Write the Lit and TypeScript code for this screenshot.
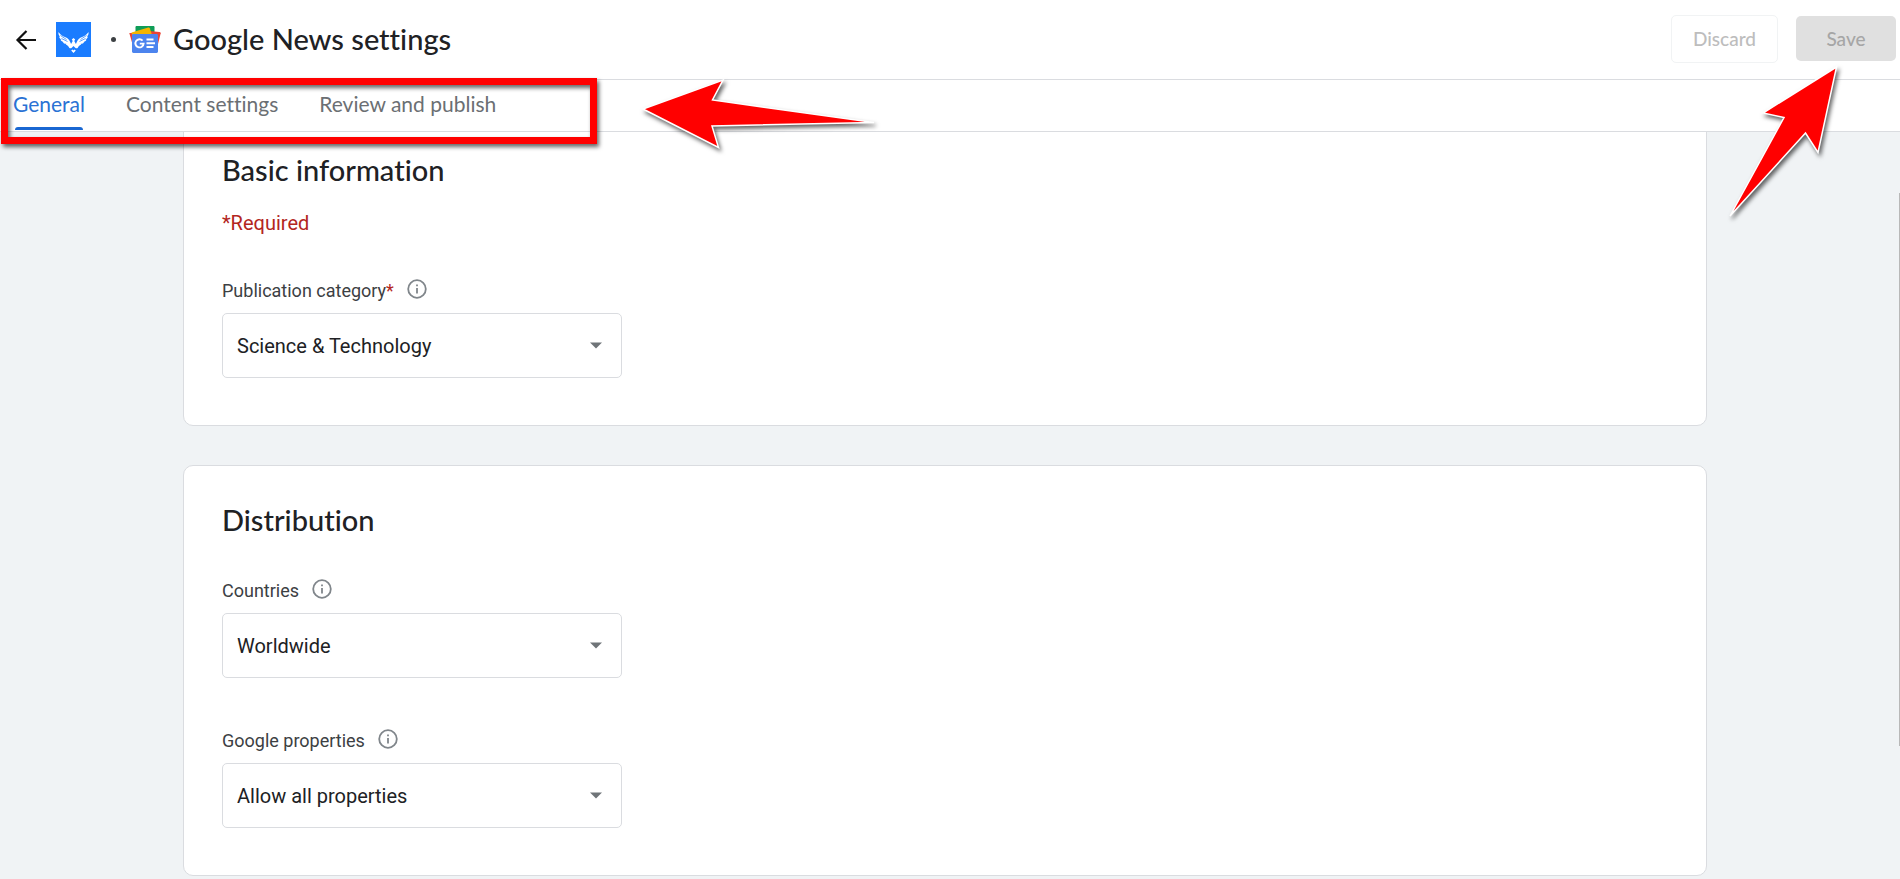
import { LitElement, html, css, nothing } from "lit";
import { customElement, property, state } from "lit/decorators.js";

interface Field {
  id: string;
  label: string;
  required?: boolean;
  options: string[];
}

const CATEGORY: Field[] = [
  { id: "category", label: "Publication category", required: true, options: ["Science & Technology"] },
];

const DISTRIBUTION: Field[] = [
  { id: "countries", label: "Countries", options: ["Worldwide"] },
  { id: "properties", label: "Google properties", options: ["Allow all properties"] },
];

const TABS = ["General", "Content settings", "Review and publish"];

/* One labelled drop-down with its info button. */
@customElement("select-field")
export class SelectField extends LitElement {
  @property({ attribute: false }) field!: Field;

  static styles = css`
    :host {
      display: block;
      font-family: Roboto, sans-serif;
    }
    .caption {
      display: flex;
      align-items: center;
      gap: 13px;
      height: 24px;
      margin-bottom: 12px;
    }
    label {
      padding-top: 3px;
      font-size: 18px;
      line-height: 24px;
      color: #3c4043;
    }
    .star {
      color: #b3261e;
    }
    .info {
      display: flex;
      padding: 0;
      border: 0;
      background: none;
    }
    .box {
      position: relative;
      width: 400px;
      max-width: 100%;
    }
    select {
      display: block;
      width: 100%;
      height: 65px;
      padding: 0 48px 0 14px;
      border: 1px solid #dadce0;
      border-radius: 5px;
      background: #fff;
      color: #202124;
      font: 400 20px Roboto, sans-serif;
      appearance: none;
    }
    .caret {
      position: absolute;
      right: 20px;
      top: 29px;
      pointer-events: none;
    }
  `;

  render() {
    const { id, label, required, options } = this.field;
    return html`
      <div class="caption">
        <label for=${id}>${label}${required ? html`<span class="star">*</span>` : nothing}</label>
        <button class="info" type="button" aria-label="About ${label}">
          <svg width="20" height="20" viewBox="0 0 20 20">
            <circle cx="10" cy="10" r="8.8" fill="none" stroke="#80868b" stroke-width="1.8" />
            <path d="M9.1 9h1.8v5.4H9.1zM9.1 5.4h1.8v1.9H9.1z" fill="#80868b" />
          </svg>
        </button>
      </div>
      <div class="box">
        <select id=${id}>
          ${options.map((o) => html`<option>${o}</option>`)}
        </select>
        <svg class="caret" width="12" height="7" viewBox="0 0 12 7"><path d="M0 .5h12L6 6.5z" fill="#6f7478" /></svg>
      </div>
    `;
  }
}

const birdLogo = html`
  <svg width="35" height="35" viewBox="0 0 35 35" role="img" aria-label="Publication logo">
    <path fill="#1a7cff" d="M0 0h35v35H0z" />
    <g fill="#fff">
      <path d="M2.5 10c2 3.200 4.600 4.300 7 5.200 2.200.9 3.600 2.300 4.600 4.600l1 2.300 1.600-3-.9-1.600 1.700-1.500 1.700 1.500-.9 1.600 1.600 3 1-2.300c1-2.300 2.400-3.700 4.600-4.600 2.400-.9 5-2 7-5.200.3 2-.4 3.600-1.700 4.800.5 0 .8-.1 1.200-.3-.4 1.600-1.400 2.700-2.700 3.300h1.200c-.8 1.400-1.900 2.100-3.200 2.400l.9.4c-1 1-2.200 1.300-3.500 1.200l.5.7c-1.500.5-2.500 1.500-3.400 3.300-.7.8-1.800.7-2.600 0L17.500 24l-1.700 1.800c-.8.7-1.900.8-2.600 0-.9-1.800-1.900-2.800-3.400-3.300l.5-.7c-1.300.1-2.500-.2-3.500-1.200l.9-.4c-1.300-.3-2.400-1-3.200-2.400h1.200c-1.300-.6-2.300-1.700-2.700-3.300.4.200.7.300 1.200.3C2.900 13.600 2.200 12 2.500 10z" />
      <path d="M17.500 31l-2.300-2.400 1.300-1 1 .9 1-.9 1.300 1z" />
    </g>
    <path d="M4.500 13.500l6 4M5.500 16.500l6 3M30.500 13.500l-6 4M29.500 16.500l-6 3" stroke="#1a7cff" stroke-width=".7" fill="none" />
  </svg>
`;

const newsLogo = html`
  <svg width="32" height="27" viewBox="0 0 32 27" role="img" aria-label="Google News">
    <path fill="#0f9d58" d="M6.500 1.200c0-.7.500-1.200 1.200-1.200h16.600c.7 0 1.200.5 1.200 1.200V14h-19z" />
    <path fill="#ea4335" d="M20 5l10.600 1c.7.100 1.200.6 1.100 1.300L28.500 20H20z" />
    <path fill="#ea4335" d="M.3 7h6v13H4z" />
    <path fill="#f5b400" d="M2.500 6.500L19.300 1.600c.7-.2 1.300.1 1.500.7L24 12 5 16z" />
    <path fill="#4c84ee" d="M4.400 8h23.200c.8 0 1.400.6 1.400 1.400v16.200c0 .8-.6 1.400-1.400 1.400H4.400c-.8 0-1.400-.6-1.400-1.400V9.400C3 8.600 3.600 8 4.400 8z" />
    <path d="M13.600 14.600a4.100 4.100 0 1 0 1 3h-3.800" fill="none" stroke="#fff" stroke-width="1.900" />
    <path fill="#fff" d="M17.500 12.500h7v2h-7zM17.500 16.300h8.500v2h-8.500zM17.500 20.100h7v2h-7z" />
  </svg>
`;

@customElement("app-root")
export class AppRoot extends LitElement {
  @state() private tab = 0;

  static styles = css`
    :host {
      display: flex;
      flex-direction: column;
      position: relative;
      height: 100vh;
      overflow: hidden;
      background: #f0f3f5;
      color: #202124;
      font-family: Lato, sans-serif;
      font-variant-ligatures: none;
    }
    * {
      box-sizing: border-box;
    }
    button {
      font-family: inherit;
      font-variant-ligatures: inherit;
    }
    header {
      display: flex;
      align-items: center;
      flex: none;
      height: 80px;
      padding: 0 4px 0 15px;
      border-bottom: 1px solid #dadce0;
      background: #fff;
    }
    header svg {
      display: block;
    }
    .back {
      padding: 0;
      border: 0;
      background: none;
    }
    .logo {
      margin-left: 19px;
    }
    .dot {
      width: 5px;
      height: 5px;
      margin: 0 13px 0 20px;
      border-radius: 50%;
      background: #3c4043;
    }
    h1 {
      flex: 1;
      margin: 0 0 0 12px;
      padding-bottom: 2px;
      font-size: 29px;
      line-height: 36px;
      font-weight: 500;
    }
    .actions {
      display: flex;
      align-items: center;
      gap: 18px;
      padding-bottom: 2px;
    }
    .discard,
    .save {
      font-size: 19px;
      font-weight: 500;
      border-radius: 5px;
    }
    .discard {
      width: 107px;
      height: 48px;
      border: 1px solid #f1f3f4;
      background: #fff;
      color: #bdbdbd;
    }
    .save {
      width: 100px;
      height: 45px;
      border: 0;
      background: #e0e0e0;
      color: #a6a6a6;
    }
    nav {
      display: flex;
      flex: none;
      gap: 41px;
      height: 52px;
      padding-left: 13px;
      border-bottom: 1px solid #dadce0;
      background: #fff;
    }
    .tab {
      display: flex;
      flex-direction: column;
      justify-content: space-between;
      height: 50px;
      padding: 11px 0 0;
      border: 0;
      background: none;
      color: #6b6f73;
      font-size: 21px;
      line-height: 26px;
    }
    .tab.on {
      color: #2a72d4;
    }
    .tab.on::after {
      content: "";
      align-self: stretch;
      height: 3px;
      margin: 0 2px;
      border-radius: 3px 3px 0 0;
      background: #1967d2;
    }
    main {
      display: flex;
      flex-direction: column;
      gap: 39px;
      flex: 1;
      min-height: 0;
      overflow: hidden;
      padding: 0 193px 0 183px;
    }
    section {
      flex: none;
      padding: 36px 38px 47px;
      border: 1px solid #dadce0;
      border-radius: 10px;
      background: #fff;
    }
    .scrolled {
      margin-top: -17px;
    }
    h2 {
      margin: 0;
      font-size: 29px;
      line-height: 36px;
      font-weight: 500;
    }
    .required {
      margin: 23px 0 0;
      font: 400 20px/24px Roboto, sans-serif;
      color: #b3261e;
    }
    select-field {
      margin-top: 49px;
    }
    h2 + select-field {
      margin-top: 39px;
    }
    .required + select-field {
      margin-top: 42px;
    }
    .thumb {
      position: absolute;
      right: 0;
      top: 193px;
      width: 1px;
      height: 553px;
      background: #b8b8b8;
    }
    .frame {
      position: absolute;
      left: 1px;
      top: 78px;
      width: 596px;
      height: 66px;
      border: 7px solid #f00;
      filter: drop-shadow(2px 3px 2px rgba(0, 0, 0, 0.6));
      pointer-events: none;
    }
    .arrow {
      position: absolute;
      overflow: visible;
      filter: drop-shadow(2px 3px 2px rgba(0, 0, 0, 0.6));
      pointer-events: none;
    }
    .arrow path {
      fill: #f00;
      stroke: #fff;
      stroke-width: 1.5;
    }
    .to-tabs {
      left: 643px;
      top: 80px;
    }
    .to-save {
      right: 63px;
      top: 67px;
    }
  `;

  render() {
    return html`
      <header>
        <button class="back" type="button" aria-label="Back">
          <svg width="22" height="20" viewBox="0 0 22 20">
            <path d="M21 10H2.600M11.500 1L2.500 10l9 9" fill="none" stroke="#111" stroke-width="2.200" />
          </svg>
        </button>
        <div class="logo">${birdLogo}</div>
        <span class="dot"></span>
        ${newsLogo}
        <h1>Google News settings</h1>
        <div class="actions">
          <button class="discard" type="button" disabled>Discard</button>
          <button class="save" type="button" disabled>Save</button>
        </div>
      </header>
      <nav>
        ${TABS.map(
          (t, i) => html`<button type="button" class="tab ${i === this.tab ? "on" : ""}" @click=${() => (this.tab = i)}>${t}</button>`
        )}
      </nav>
      <main>
        <section class="scrolled">
          <h2>Basic information</h2>
          <p class="required">*Required</p>
          ${CATEGORY.map((f) => html`<select-field .field=${f}></select-field>`)}
        </section>
        <section>
          <h2>Distribution</h2>
          ${DISTRIBUTION.map((f) => html`<select-field .field=${f}></select-field>`)}
        </section>
      </main>
      <div class="thumb"></div>
      <div class="frame"></div>
      <svg class="arrow to-tabs" width="231" height="68" viewBox="0 0 231 68" aria-hidden="true">
        <path d="M0 29L80 0 69.500 20 231 42.500 69 46 75.500 67.500z" />
      </svg>
      <svg class="arrow to-save" width="108" height="150" viewBox="0 0 108 150" aria-hidden="true">
        <path d="M107.500 0L34 46l21 4.500L1 149 76.500 66 89 85.500z" />
      </svg>
    `;
  }
}
